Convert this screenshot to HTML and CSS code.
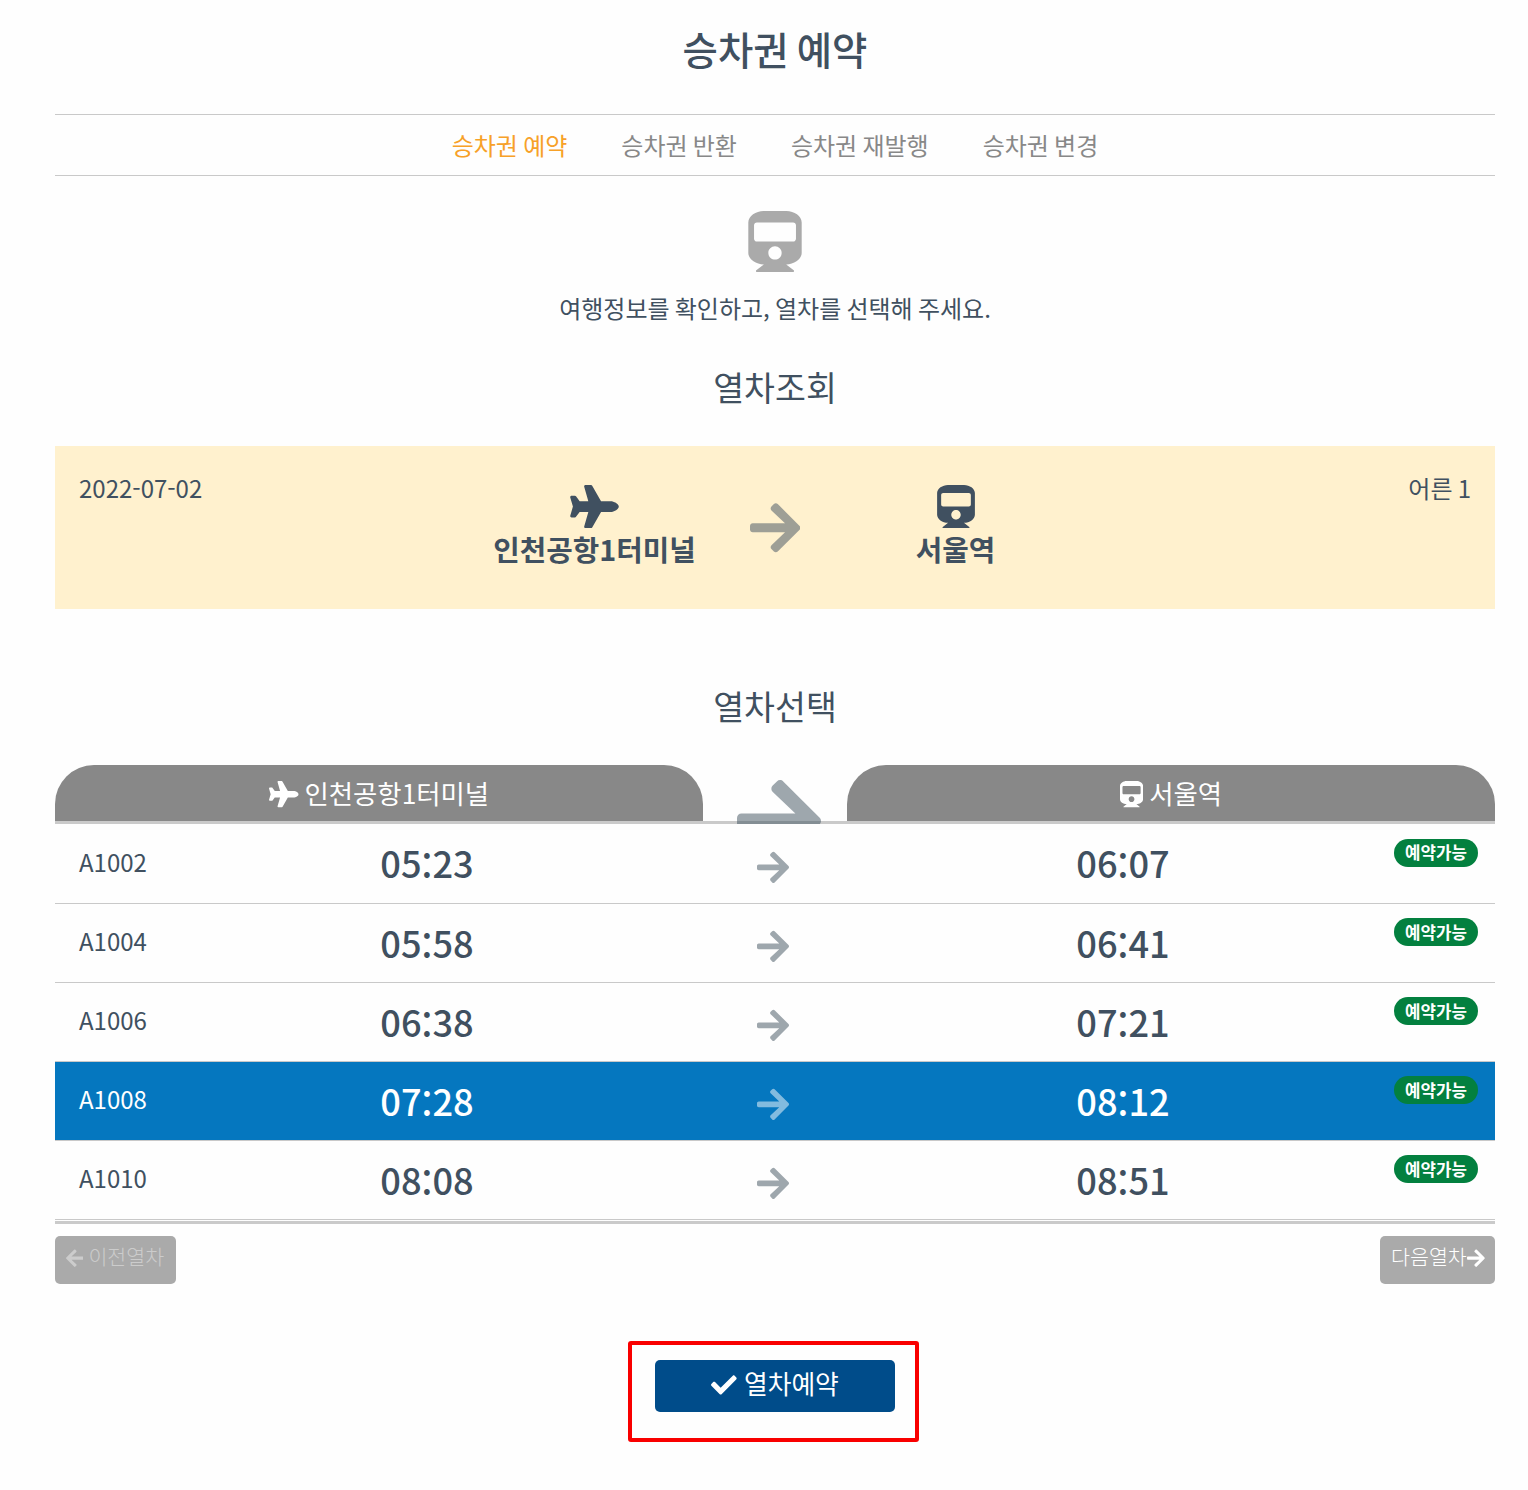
FILE: index.html
```html
<!DOCTYPE html>
<html lang="ko">
<head>
    <meta charset="UTF-8">
    <meta name="viewport" content="width=device-width, initial-scale=1.0">
    <title>승차권 예약</title>
    <link rel="stylesheet" href="styles.css">
</head>
<body>
    <!-- 아이콘 -->
    <svg class="symbols" width="0" height="0">
        <symbol id="train" viewBox="0 0 448 512"><path d="M448 96v256c0 51.815-61.624 96-130.022 96l62.98 49.721C386.905 502.417 383.562 512 376 512H72c-7.578 0-10.892-9.594-4.957-14.279L130.022 448C61.82 448 0 403.954 0 352V96C0 42.981 64 0 128 0h192c65 0 128 42.981 128 96zm-48 136V120c0-13.255-10.745-24-24-24H72c-13.255 0-24 10.745-24 24v112c0 13.255 10.745 24 24 24h304c13.255 0 24-10.745 24-24zm-176 64c-30.928 0-56 25.072-56 56s25.072 56 56 56 56-25.072 56-56-25.072-56-56-56z"/></symbol>
        <symbol id="plane" viewBox="0 0 576 512"><path d="M480 192H365.71L260.61 8.06A16.014 16.014 0 0 0 246.71 0h-65.5c-10.63 0-18.3 10.17-15.38 20.39L214.86 192H112l-43.2-57.6c-3.02-4.03-7.77-6.4-12.8-6.4H16.01C5.6 128-2.04 137.78.49 147.88L32 256 .49 364.12C-2.04 374.22 5.6 384 16.01 384H56c5.04 0 9.78-2.37 12.8-6.4L112 320h102.86l-49.03 171.6c-2.92 10.22 4.75 20.4 15.38 20.4h65.5c5.74 0 11.04-3.08 13.89-8.06L365.71 320H480c35.35 0 96-28.65 96-64s-60.65-64-96-64z"/></symbol>
        <symbol id="arrow-right" viewBox="0 0 448 512"><path d="M190.5 66.9l22.2-22.2c9.4-9.4 24.6-9.4 33.9 0L441 239c9.4 9.4 9.4 24.6 0 33.9L246.6 467.3c-9.4 9.4-24.6 9.4-33.9 0l-22.2-22.2c-9.5-9.5-9.3-25 .4-34.3L311.4 296H24c-13.3 0-24-10.7-24-24v-32c0-13.3 10.7-24 24-24h287.4L190.9 101.2c-9.8-9.3-10-24.8-.4-34.3z"/></symbol>
        <symbol id="arrow-left" viewBox="0 0 448 512"><path d="M257.5 445.1l-22.2 22.2c-9.4 9.4-24.6 9.4-33.9 0L7 273c-9.4-9.4-9.4-24.6 0-33.9L201.4 44.7c9.4-9.4 24.6-9.4 33.9 0l22.2 22.2c9.5 9.5 9.3 25-.4 34.3L136.6 216H424c13.3 0 24 10.7 24 24v32c0 13.3-10.7 24-24 24H136.6l120.5 114.8c9.8 9.3 10 24.8.4 34.3z"/></symbol>
        <symbol id="check" viewBox="0 0 512 512"><path d="M173.898 439.404l-166.4-166.4c-9.997-9.997-9.997-26.206 0-36.204l36.203-36.204c9.997-9.998 26.207-9.998 36.204 0L192 312.69 432.095 72.596c9.997-9.997 26.207-9.997 36.204 0l36.203 36.204c9.997 9.997 9.997 26.206 0 36.204l-294.4 294.401c-9.998 9.997-26.207 9.997-36.204-.001z"/></symbol>
    </svg>

    <div class="container">
        <h1>승차권 예약</h1>

        <nav class="tabs">
            <a class="active">승차권 예약</a>
            <a>승차권 반환</a>
            <a>승차권 재발행</a>
            <a>승차권 변경</a>
        </nav>

        <div class="guide">
            <svg class="guide-icon"><use href="#train"/></svg>
            <p>여행정보를 확인하고, 열차를 선택해 주세요.</p>
        </div>

        <h2>열차조회</h2>
        <div class="trip">
            <span class="trip-date">2022-07-02</span>
            <div class="station">
                <svg class="station-icon plane"><use href="#plane"/></svg>
                <strong>인천공항1터미널</strong>
            </div>
            <svg class="trip-arrow"><use href="#arrow-right"/></svg>
            <div class="station">
                <svg class="station-icon"><use href="#train"/></svg>
                <strong>서울역</strong>
            </div>
            <span class="trip-people">어른 1</span>
        </div>

        <h2 class="select-title">열차선택</h2>
        <div class="list-head">
            <div class="head-station">
                <svg class="head-icon plane"><use href="#plane"/></svg>
                <span>인천공항1터미널</span>
            </div>
            <div class="head-middle">
                <svg class="head-arrow"><use href="#arrow-right"/></svg>
            </div>
            <div class="head-station">
                <svg class="head-icon"><use href="#train"/></svg>
                <span>서울역</span>
            </div>
        </div>

        <div class="list">
            <div class="row first">
                <span class="code">A1002</span>
                <span class="time">05<span class="colon">:</span>23</span>
                <svg class="row-arrow"><use href="#arrow-right"/></svg>
                <span class="time">06<span class="colon">:</span>07</span>
                <span class="badge">예약가능</span>
            </div>
            <div class="row">
                <span class="code">A1004</span>
                <span class="time">05<span class="colon">:</span>58</span>
                <svg class="row-arrow"><use href="#arrow-right"/></svg>
                <span class="time">06<span class="colon">:</span>41</span>
                <span class="badge">예약가능</span>
            </div>
            <div class="row">
                <span class="code">A1006</span>
                <span class="time">06<span class="colon">:</span>38</span>
                <svg class="row-arrow"><use href="#arrow-right"/></svg>
                <span class="time">07<span class="colon">:</span>21</span>
                <span class="badge">예약가능</span>
            </div>
            <div class="row selected">
                <span class="code">A1008</span>
                <span class="time">07<span class="colon">:</span>28</span>
                <svg class="row-arrow"><use href="#arrow-right"/></svg>
                <span class="time">08<span class="colon">:</span>12</span>
                <span class="badge">예약가능</span>
            </div>
            <div class="row">
                <span class="code">A1010</span>
                <span class="time">08<span class="colon">:</span>08</span>
                <svg class="row-arrow"><use href="#arrow-right"/></svg>
                <span class="time">08<span class="colon">:</span>51</span>
                <span class="badge">예약가능</span>
            </div>
        </div>

        <div class="pager">
            <button class="btn-page prev" disabled><svg><use href="#arrow-left"/></svg><span>이전열차</span></button>
            <button class="btn-page"><span>다음열차</span><svg><use href="#arrow-right"/></svg></button>
        </div>

        <div class="highlight">
            <button class="btn-reserve"><svg><use href="#check"/></svg><span>열차예약</span></button>
        </div>
    </div>
</body>
</html>
```
FILE: styles.css
```css
* {
    box-sizing: border-box;
}

body {
    margin: 0;
    background-color: #fefefe;
    color: #405060;
    font-family: "Noto Sans CJK KR", sans-serif;
    font-size: 24px;
    line-height: 36px;
    word-spacing: -1.5px;
}

svg {
    fill: currentColor;
    flex: none;
}

.symbols {
    display: block;
}

.container {
    width: 1440px;
    height: 1490px;
    margin-left: 55px;
    overflow: hidden;
}

h1 {
    margin: 0;
    padding-top: 20px;
    height: 114px;
    font-size: 38.4px;
    font-weight: 500;
    line-height: 56px;
    text-align: center;
    word-spacing: -2.5px;
}

h2 {
    margin: 0;
    font-size: 33.6px;
    font-weight: 400;
    line-height: 46px;
    text-align: center;
}

/* 상단 메뉴 */
.tabs {
    display: flex;
    justify-content: center;
    gap: 54px;
    height: 62px;
    padding-top: 12px;
    border-top: 1px solid #c9c9c9;
    border-bottom: 1px solid #c9c9c9;
    color: #888;
}

.tabs .active {
    color: #f7a128;
}

.guide {
    display: flex;
    flex-direction: column;
    align-items: center;
    height: 188px;
    padding-top: 35px;
}

.guide-icon {
    width: 54px;
    height: 61px;
    color: #aaa;
}

.guide p {
    margin: 18px 0 0;
}

/* 열차조회 */
.trip {
    display: grid;
    grid-template-columns: 419px 241px 120px 241px 419px;
    height: 163px;
    margin-top: 36px;
    background-color: #fff1ce;
}

.trip-date {
    padding: 24px 0 0 24px;
}

.trip-people {
    padding: 24px 24px 0 0;
    text-align: right;
}

.station {
    display: flex;
    flex-direction: column;
    align-items: center;
    padding-top: 39px;
}

.station-icon {
    width: 38px;
    height: 43.2px;
}

.station-icon.plane {
    width: 49px;
}

.station strong {
    font-size: 28.8px;
    font-weight: 700;
    line-height: 42px;
    white-space: nowrap;
}

.trip-arrow {
    align-self: center;
    justify-self: center;
    width: 50.4px;
    height: 57.6px;
    opacity: 0.5;
}

.select-title {
    margin-top: 74px;
}

/* 열차선택 */
.list-head {
    display: grid;
    grid-template-columns: 45% 10% 45%;
    height: 59px;
    margin-top: 36px;
    border-bottom: 3px solid #cacaca;
}

.head-station {
    display: flex;
    justify-content: center;
    align-items: center;
    gap: 6px;
    height: 56px;
    border-radius: 39px 39px 0 0;
    background-color: #888;
    color: #fff;
    font-size: 26.4px;
}

.head-icon {
    width: 23.1px;
    height: 26.4px;
    margin-top: 3px;
}

.head-icon.plane {
    width: 29.7px;
}

.head-middle {
    height: 59px;
    padding: 8px 0 0 33.5px;
    overflow: hidden;
}

.head-arrow {
    display: block;
    width: 84px;
    height: 96px;
}

.head-arrow,
.row-arrow {
    color: #41535f;
    opacity: 0.5;
}

.list {
    padding-bottom: 1px;
    border-bottom: 3px solid #cacaca;
}

.row {
    display: grid;
    grid-template-columns: 144px 456px 236px 464px 140px;
    height: 79px;
    border-bottom: 1px solid #c9c9c9;
}

.row.first {
    height: 80px;
    padding-top: 1px;
}

.row.selected {
    background-color: #0577bf;
    color: #fff;
}

.code {
    padding: 19px 0 0 24px;
}

.time {
    padding-top: 10px;
    font-size: 36.2px;
    font-weight: 500;
    line-height: 56px;
    text-align: center;
}

.first .time {
    padding-top: 9px;
}

/* 콜론을 기준선에 맞춤 */
.colon {
    display: inline-block;
    line-height: 1;
    vertical-align: -2px;
}

.row-arrow {
    width: 32px;
    height: 36.6px;
    margin-top: 24px;
    justify-self: center;
}

.selected .row-arrow {
    color: #fff;
}

.badge {
    justify-self: end;
    width: 84px;
    height: 28px;
    margin: 14px 17px 0 0;
    border-radius: 14px;
    background-color: #03803f;
    color: #fff;
    font-size: 16.8px;
    font-weight: 700;
    line-height: 28px;
    text-align: center;
}

.first .badge {
    line-height: 27px;
}

/* 이전 / 다음 */
.pager {
    display: flex;
    justify-content: space-between;
    margin-top: 12px;
}

button {
    display: flex;
    border: none;
    border-radius: 5px;
    color: #fff;
    font-family: inherit;
}

.btn-page {
    width: 115px;
    height: 48px;
    padding: 6px 0 0 11px;
    background-color: #aaa;
    font-size: 20.6px;
    font-weight: 300;
    line-height: 29px;
}

.btn-page svg {
    width: 17.9px;
    height: 20.4px;
    margin-top: 6px;
}

.btn-page.prev {
    width: 121px;
    gap: 5px;
    padding-left: 10.5px;
    color: #ccc;
}

/* 예약 버튼 강조 */
.highlight {
    width: 291px;
    height: 101px;
    margin: 57px 0 0 573px;
    padding: 15px 0 0 23px;
    border: 4px solid #f90000;
    border-radius: 3px;
}

.btn-reserve {
    justify-content: center;
    gap: 7px;
    width: 240px;
    height: 52px;
    padding: 4px 0 0;
    background-color: #004c8a;
    font-size: 25.8px;
    line-height: 38px;
}

.btn-reserve svg {
    width: 25.8px;
    height: 25.8px;
    margin-top: 8px;
}
```
